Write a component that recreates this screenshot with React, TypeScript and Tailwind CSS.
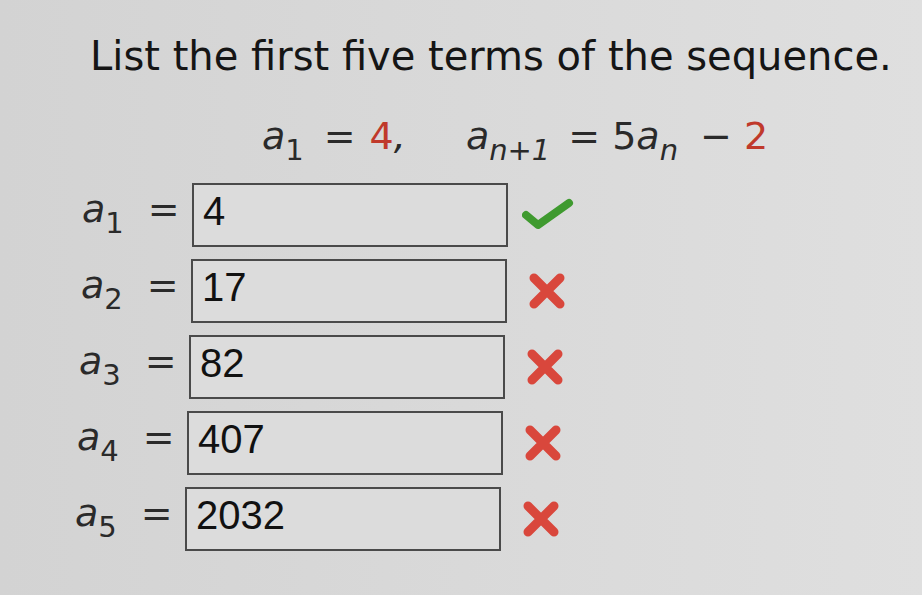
import React from "react";

type Row = { n: number; value: string; correct: boolean; left: string };

const rows: Row[] = [
  { n: 1, value: "4", correct: true, left: "ml-[82px]" },
  { n: 2, value: "17", correct: false, left: "ml-[81px]" },
  { n: 3, value: "82", correct: false, left: "ml-[79px]" },
  { n: 4, value: "407", correct: false, left: "ml-[77px]" },
  { n: 5, value: "2032", correct: false, left: "ml-[75px]" },
];

function Check() {
  return (
    <svg width="52" height="34" viewBox="0 0 52 34">
      <path
        d="M4 17 L16 27 L47 5"
        fill="none"
        stroke="#3f9a2f"
        strokeWidth="8"
        strokeLinecap="round"
        strokeLinejoin="round"
      />
    </svg>
  );
}

function Cross() {
  return (
    <svg width="38" height="38" viewBox="0 0 38 38">
      <path
        d="M6 6 L32 32 M32 6 L6 32"
        fill="none"
        stroke="#d9473c"
        strokeWidth="9"
        strokeLinecap="round"
      />
    </svg>
  );
}

function Term({ sub, italicSub = false }: { sub: string; italicSub?: boolean }) {
  return (
    <span className="whitespace-nowrap">
      <span className="italic">a</span>
      <span className={`relative top-[11px] text-[29px] ${italicSub ? "italic" : ""}`}>{sub}</span>
    </span>
  );
}

export default function App() {
  return (
    <div className="w-[922px] h-[595px] overflow-hidden bg-linear-to-r from-[#d3d3d3] to-[#dfdfdf] text-[#151515] font-['DejaVu_Sans',sans-serif]">
      <h1 className="pl-[90px] pt-[29px] text-[40px] leading-[54px]">
        List the first five terms of the sequence.
      </h1>

      <div className="mt-[33px] ml-[262px] flex items-baseline text-[38px] leading-[40px] text-[#2a2a2a]">
        <Term sub="1" />
        <span className="ml-[20px]">=</span>
        <span className="ml-[14px] text-[#c0392b]">4</span>
        <span className="italic">,</span>
        <span className="ml-[60px]">
          <Term sub="n+1" italicSub />
        </span>
        <span className="ml-[18px]">=</span>
        <span className="ml-[12px]">5</span>
        <Term sub="n" italicSub />
        <span className="ml-[22px]">−</span>
        <span className="ml-[12px] text-[#c0392b]">2</span>
      </div>

      <div className="mt-[24px] flex flex-col gap-[12px]">
        {rows.map((r) => (
          <div key={r.n} className={`flex items-center h-[64px] ${r.left}`}>
            <div className="w-[110px] flex items-baseline text-[38px] leading-[40px] text-[#2a2a2a] -mt-[10px]">
              <Term sub={String(r.n)} />
              <span className="ml-[24px]">=</span>
            </div>
            <div className="w-[316px] h-[64px] border-2 border-[#4a4a4a] bg-[#dcdcdc] pl-[9px] pt-[6px] text-[40px] leading-[40px] text-[#111] font-['Liberation_Sans',Arial,sans-serif]">
              {r.value}
            </div>
            <div className="w-[80px] flex justify-center">
              {r.correct ? <Check /> : <Cross />}
            </div>
          </div>
        ))}
      </div>
    </div>
  );
}
